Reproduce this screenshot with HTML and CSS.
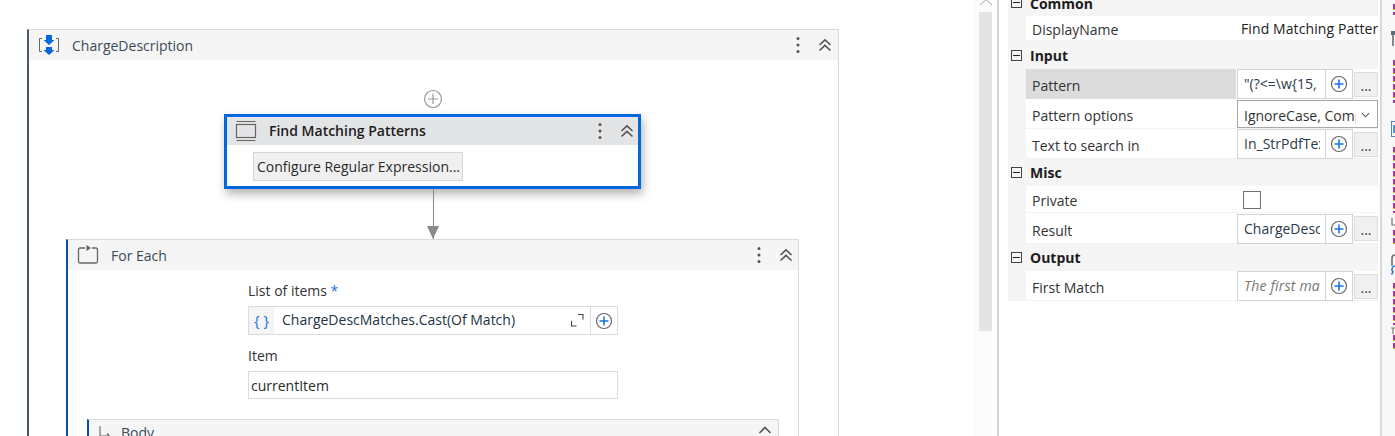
FILE: index.html
```html
<!DOCTYPE html>
<html lang="en">
<head>
    <meta charset="UTF-8">
    <title>Find Matching Patterns</title>
    <link rel="stylesheet" href="styles.css">
</head>
<body>
    <svg class="sprite" width="0" height="0">
        <symbol id="dots" viewBox="0 0 6 18"><circle cx="3" cy="2.500" r="1.500"/><circle cx="3" cy="9" r="1.500"/><circle cx="3" cy="15.500" r="1.500"/></symbol>
        <symbol id="collapse" viewBox="0 0 14 14"><path d="M1.500 7 7 1.800 12.500 7M1.500 12.500 7 7.300l5.500 5.200" fill="none" stroke="#555" stroke-width="1.600"/></symbol>
        <symbol id="plus-blue" viewBox="0 0 18 18"><circle cx="9" cy="9" r="7.500" fill="#fff" stroke="#666" stroke-width="1.200"/><path d="M9 4.500v9M4.500 9h9" stroke="#1a73e0" stroke-width="1.600"/></symbol>
    </svg>

    <div class="canvas">
        <div class="scope">
            <div class="scope-head">
                <svg class="head-icon" width="22" height="22" viewBox="0 0 22 22">
                    <path d="M4 4.500H1.500v13H4M18 4.500h2.500v13H18" fill="none" stroke="#666" stroke-width="1"/>
                    <path d="M8 1h6v5h2.500L11 11 5.500 6H8zM8 13h6v3h2.500L11 21l-5.500-5H8z" fill="#0067df"/>
                </svg>
                <span class="head-title">ChargeDescription</span>
                <svg class="dots"><use href="#dots"/></svg>
                <svg class="collapse"><use href="#collapse"/></svg>
            </div>
            <div class="scope-body">
                <svg class="add-btn" width="20" height="20" viewBox="0 0 20 20">
                    <circle cx="10" cy="10" r="8.500" fill="#fff" stroke="#999" stroke-width="1.200"/>
                    <path d="M10 5v10M5 10h10" stroke="#999" stroke-width="1.200"/>
                </svg>

                <div class="activity">
                    <div class="activity-head">
                        <svg class="head-icon" width="22" height="22" viewBox="0 0 22 22">
                            <path d="M1.500 1.500h19M1.500 20.500h19" stroke="#666" stroke-width="1.200"/>
                            <rect x="1.500" y="4.500" width="19" height="13" fill="none" stroke="#666" stroke-width="1.200"/>
                        </svg>
                        <span class="activity-title">Find Matching Patterns</span>
                        <svg class="dots"><use href="#dots"/></svg>
                        <svg class="collapse"><use href="#collapse"/></svg>
                    </div>
                    <div class="activity-body">
                        <div class="config-btn">Configure Regular Expression...</div>
                    </div>
                </div>

                <div class="connector"></div>

                <div class="foreach">
                    <div class="foreach-head">
                        <svg class="head-icon" width="22" height="22" viewBox="0 0 22 22">
                            <path d="M8 4H3a1.500 1.500 0 0 0-1.500 1.500v12A1.500 1.500 0 0 0 3 19h16a1.500 1.500 0 0 0 1.500-1.500v-12A1.500 1.500 0 0 0 19 4h-4" fill="none" stroke="#666" stroke-width="1.300"/>
                            <path d="M9.500 1 14 4 9.500 7z" fill="#666"/>
                        </svg>
                        <span class="head-title">For Each</span>
                        <svg class="dots"><use href="#dots"/></svg>
                        <svg class="collapse"><use href="#collapse"/></svg>
                    </div>
                    <div class="fields">
                        <div class="field-label">List of items <span class="req">*</span></div>
                        <div class="expr-input">
                            <span class="expr-type">{ }</span>
                            <span class="expr-text">ChargeDescMatches.Cast(Of Match)</span>
                            <svg class="expand" width="14" height="14" viewBox="0 0 14 14">
                                <path d="M8 1.500h5v5M1.500 8v5h5" fill="none" stroke="#444" stroke-width="1.100"/>
                            </svg>
                            <span class="expr-add"><svg width="18" height="18"><use href="#plus-blue"/></svg></span>
                        </div>
                        <div class="field-label item-label">Item</div>
                        <div class="text-input">currentItem</div>
                    </div>
                    <div class="body-seq">
                        <div class="body-head">
                            <svg class="body-icon" width="14" height="14" viewBox="0 0 14 14">
                                <path d="M2 1v10h9M9 8.500 11.500 11 9 13.500" fill="none" stroke="#666" stroke-width="1.100"/>
                            </svg>
                            <span class="body-title">Body</span>
                            <svg class="body-chev" width="14" height="14" viewBox="0 0 14 14">
                                <path d="M1.500 8 7 2.500 12.500 8" fill="none" stroke="#555" stroke-width="1.600"/>
                            </svg>
                        </div>
                    </div>
                </div>
            </div>
        </div>
    </div>

    <div class="scrollbar">
        <svg class="scroll-up" width="14" height="10" viewBox="0 0 14 10"><path d="M1 6 7 0.500 13 6" fill="none" stroke="#aaa" stroke-width="1"/></svg>
        <div class="scroll-thumb"></div>
    </div>
    <div class="splitter"></div>

    <div class="props">
        <div class="cat cat-top"><span class="toggle"></span><b>Common</b></div>
        <div class="row row-name">
            <span class="name">DisplayName</span>
            <span class="value plain">Find Matching Patterns</span>
        </div>

        <div class="cat cat-input"><span class="toggle"></span><b>Input</b></div>
        <div class="row row-30 active">
            <span class="name">Pattern</span>
            <div class="value">
                <span class="box"><span class="box-text">"(?&lt;=\w{15,</span><span class="box-add"><svg width="18" height="18"><use href="#plus-blue"/></svg></span></span>
                <span class="more">...</span>
            </div>
        </div>
        <div class="row row-30">
            <span class="name">Pattern options</span>
            <div class="value">
                <span class="select"><span class="select-text">IgnoreCase, Compiled</span>
                    <svg width="9" height="6" viewBox="0 0 10 6"><path d="M1 1l4 4 4-4" fill="none" stroke="#555" stroke-width="1.200"/></svg>
                </span>
            </div>
        </div>
        <div class="row row-30">
            <span class="name">Text to search in</span>
            <div class="value">
                <span class="box"><span class="box-text">In_StrPdfText</span><span class="box-add"><svg width="18" height="18"><use href="#plus-blue"/></svg></span></span>
                <span class="more">...</span>
            </div>
        </div>

        <div class="cat"><span class="toggle"></span><b>Misc</b></div>
        <div class="row row-27">
            <span class="name">Private</span>
            <div class="value"><span class="check"></span></div>
        </div>
        <div class="row row-31">
            <span class="name">Result</span>
            <div class="value">
                <span class="box"><span class="box-text">ChargeDescMatches</span><span class="box-add"><svg width="18" height="18"><use href="#plus-blue"/></svg></span></span>
                <span class="more">...</span>
            </div>
        </div>

        <div class="cat"><span class="toggle"></span><b>Output</b></div>
        <div class="row row-30">
            <span class="name">First Match</span>
            <div class="value">
                <span class="box"><span class="box-text hint">The first match</span><span class="box-add"><svg width="18" height="18"><use href="#plus-blue"/></svg></span></span>
                <span class="more">...</span>
            </div>
        </div>
    </div>

    <!-- toolbar cut off by the right edge of the window -->
    <svg class="side-strip" width="13" height="436" viewBox="0 0 13 436">
        <path d="M12 4v11M12 60v43M12 147v66M12 230v16M12 283v42M12 335v15" stroke="#a0408a" stroke-width="2" stroke-dasharray="5 3"/>
        <path d="M12 9v6M12 65v38M12 152v61M12 235v11M12 288v37M12 340v10" stroke="#c9a24a" stroke-width="2" stroke-dasharray="1 7"/>
        <path d="M9 31h4v4h-4z" fill="#5b6b78"/>
        <path d="M10 35h2v11h-2z" fill="#7a8a96"/>
        <rect x="9.500" y="121.500" width="6" height="15" fill="#fff" stroke="#5a7fa8"/>
        <path d="M12 125v8" stroke="#1a73e0" stroke-width="1.500"/>
        <path d="M10 218v7h3" fill="none" stroke="#777" stroke-width="1.200"/>
        <path d="M10 266v-8a3 3 0 0 1 3-3" fill="none" stroke="#666" stroke-width="1.500"/>
        <path d="M13 266a3.500 3.500 0 0 0-2 6l-1.500 2.500" fill="none" stroke="#1a73e0" stroke-width="1.500"/>
        <path d="M9 328h4M11 328v6" stroke="#8a7a6a" stroke-width="1.200"/>
    </svg>
</body>
</html>
```

FILE: styles.css
```css
* {
    box-sizing: border-box;
}
html, body {
    height: 100%;
}
body {
    margin: 0;
    display: flex;
    height: 436px;
    overflow: hidden;
    background-color: #fff;
    font-family: "Open Sans", "Noto Sans", sans-serif;
    font-size: 14px;
    color: #2b3a47;
}
.sprite {
    position: absolute;
}
.head-icon {
    flex: none;
}

/* canvas */
.canvas {
    width: 975px;
    flex: none;
    padding: 29px 0 0 27px;
}
.scope {
    width: 812px;
    height: 407px;
    border-top: 1px solid #d5dce0;
    border-left: 2px solid #4d5b66;
    border-right: 1px solid #d5dce0;
}
.scope-head {
    display: flex;
    align-items: center;
    height: 30px;
    padding: 0 6px 0 9px;
    background-color: #f5f5f5;
}
.head-title {
    margin-left: 12px;
    flex: 1;
    color: #3b4a57;
}
.dots {
    width: 6px;
    height: 18px;
    fill: #555;
    flex: none;
}
.collapse {
    width: 14px;
    height: 14px;
    margin-left: 17px;
    flex: none;
}
.scope-body {
    display: flex;
    flex-direction: column;
    align-items: center;
    padding: 29px 2px 0 0;
}
.add-btn {
    display: block;
}
.activity {
    width: 417px;
    height: 75px;
    margin-top: 5px;
    border: 3px solid #0067df;
    background-color: #fff;
    box-shadow: 2px 5px 9px rgba(0, 0, 0, 0.3);
}
.activity-head {
    display: flex;
    align-items: center;
    height: 28px;
    padding: 0 4px 0 8px;
    background-color: #e3e4e6;
}
.activity-title {
    margin-left: 12px;
    margin-top: -2px;
    flex: 1;
    color: #1c1c1c;
    font-weight: 600;
}
.activity-body {
    padding: 7px 0 0 26px;
}
.config-btn {
    display: inline-block;
    height: 29px;
    width: 210px;
    line-height: 27px;
    padding-left: 3px;
    border: 1px solid #d6d6d6;
    background-color: #f0f0f0;
    color: #2a2a2a;
    white-space: nowrap;
}
.connector {
    position: relative;
    width: 1px;
    height: 50px;
    margin-left: 2px;
    background-color: #8a8a8a;
}
.connector::after {
    content: "";
    position: absolute;
    left: -6px;
    bottom: 0;
    border-left: 6.500px solid transparent;
    border-right: 6.500px solid transparent;
    border-top: 13px solid #8a8a8a;
}
.foreach {
    width: 733px;
    flex: 1;
    border-top: 1px solid #d5dce0;
    border-left: 2px solid #0a4ea8;
    border-right: 1px solid #d5dce0;
    display: flex;
    flex-direction: column;
    align-items: center;
}
.foreach-head {
    align-self: stretch;
    display: flex;
    align-items: center;
    height: 30px;
    padding: 0 5px 0 9px;
    background-color: #f5f5f5;
}
.fields {
    width: 370px;
    padding-top: 11px;
}
.field-label {
    height: 25px;
    line-height: 19px;
    color: #333;
}
.item-label {
    margin-top: 11px;
}
.req {
    color: #1a73e0;
}
.expr-input {
    display: flex;
    align-items: center;
    height: 29px;
    border: 1px solid #d8dcdf;
}
.expr-type {
    width: 25px;
    align-self: stretch;
    background-color: #f5f5f5;
    color: #1a73e0;
    text-align: center;
    line-height: 26px;
    font-size: 15px;
    flex: none;
}
.expr-text {
    flex: 1;
    margin-top: -2px;
    padding-left: 8px;
    color: #223344;
}
.expand {
    margin-right: 6px;
    margin-top: -2px;
}
.expr-add {
    width: 27px;
    align-self: stretch;
    border-left: 1px solid #d8dcdf;
    display: flex;
    align-items: center;
    justify-content: center;
    flex: none;
}
.text-input {
    height: 28px;
    line-height: 28px;
    padding-left: 2px;
    border: 1px solid #d8dcdf;
    color: #2a2a2a;
}
.body-seq {
    width: 692px;
    margin-top: 20px;
    border-top: 1px solid #d5dce0;
    border-left: 2px solid #0a4ea8;
    border-right: 1px solid #d5dce0;
    flex: 1;
}
.body-head {
    display: flex;
    align-items: center;
    height: 30px;
    padding: 0 5px 6px 9px;
    background-color: #f5f5f5;
}
.body-title {
    flex: 1;
    margin-left: 9px;
    color: #3b4a57;
}
.body-icon {
    flex: none;
}
.body-chev {
    flex: none;
    margin-right: 1px;
}

/* scrollbar between canvas and properties */
.scrollbar {
    width: 17px;
    flex: none;
    padding-left: 4px;
    background-color: #fbfbfb;
}
.scroll-up {
    display: block;
    height: 12px;
    margin-top: -2px;
}
.scroll-thumb {
    width: 13px;
    height: 319px;
    background-color: #e3e4e6;
    margin-top: 2px;
}
.splitter {
    width: 16px;
    flex: none;
    background-color: #fff;
    background-image: linear-gradient(#d4d6d8, #d4d6d8);
    background-size: 2px 100%;
    background-position: 5px 0;
    background-repeat: no-repeat;
}

/* properties grid */
.props {
    width: 374px;
    flex: none;
    align-self: stretch;
    border-right: 2px solid #d8d9da;
    padding-right: 2px;
    color: #333;
}
.cat {
    display: flex;
    align-items: center;
    height: 27px;
    background-color: #f5f5f5;
    padding-left: 3px;
}
.cat b {
    margin-left: 8px;
    color: #1c1c1c;
    font-weight: 700;
}
.cat-top {
    height: 16px;
    align-items: flex-start;
    overflow: hidden;
}
.cat-top b {
    margin-top: -6px;
}
.cat-top .toggle {
    margin-top: -3px;
}
.cat-input {
    height: 28px;
}
.toggle {
    position: relative;
    width: 11px;
    height: 11px;
    border: 1px solid #444;
    flex: none;
}
.toggle::after {
    content: "";
    position: absolute;
    left: 1px;
    right: 1px;
    top: 4px;
    height: 1px;
    background-color: #222;
}
.row {
    display: flex;
    align-items: stretch;
    border-left: 18px solid #f5f5f5;
    background-color: #fff;
    box-shadow: inset 0 -1px 0 #f3f3f3;
}
.row-name {
    height: 25px;
}
.row-27 {
    height: 27px;
}
.row-30 {
    height: 30px;
}
.row-31 {
    height: 31px;
}
.name {
    width: 210px;
    flex: none;
    padding: 3px 0 0 6px;
    display: flex;
    align-items: center;
}
.row-name .name, .row-27 .name {
    padding-top: 1px;
}
.active .name {
    background-color: #dcdcdc;
}
.value {
    flex: 1;
    min-width: 0;
    display: flex;
    align-items: center;
    gap: 1px;
    padding-left: 1px;
}
.plain {
    padding-left: 5px;
    white-space: nowrap;
    overflow: hidden;
    letter-spacing: 0.1px;
    color: #222;
}
.box {
    display: flex;
    width: 116px;
    height: 30px;
    flex: none;
    border: 1px solid #ced4da;
    background-color: #fff;
}
.box-text {
    flex: 1;
    min-width: 0;
    margin-right: 5px;
    padding-left: 6px;
    overflow: hidden;
    white-space: nowrap;
    line-height: 28px;
    color: #2b3a47;
}
.hint {
    font-style: italic;
    letter-spacing: 0.2px;
    color: #777;
}
.box-add {
    width: 27px;
    flex: none;
    border-left: 1px solid #ced4da;
    display: flex;
    align-items: center;
    justify-content: center;
}
.more {
    width: 24px;
    height: 25px;
    flex: none;
    border: 1px solid #dcdcdc;
    background-color: #f0f0f0;
    text-align: center;
    line-height: 25px;
    color: #333;
}
.select {
    display: flex;
    align-items: center;
    width: 141px;
    height: 28px;
    flex: none;
    border: 1px solid #a8a8a8;
    padding: 2px 7px 0 6px;
}
.select-text {
    flex: 1;
    min-width: 0;
    margin-right: 5px;
    overflow: hidden;
    white-space: nowrap;
}
.check {
    width: 18px;
    height: 18px;
    margin-left: 6px;
    border: 1px solid #707070;
}

.side-strip {
    flex: none;
    background-color: #f8f8f8;
}
```
